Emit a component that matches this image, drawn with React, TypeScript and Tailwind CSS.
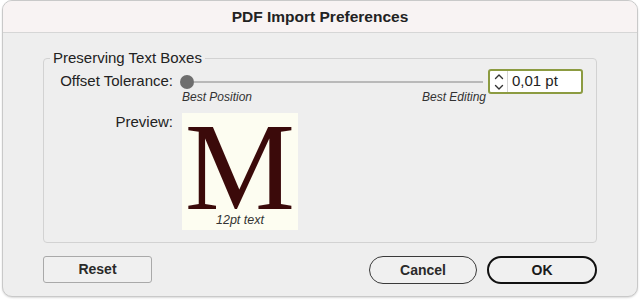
import React from "react";

const sans = "font-['Liberation_Sans',Arial,sans-serif]";

function Stepper() {
  return (
    <svg width="10" height="20" viewBox="0 0 10 20" fill="none">
      <path d="M1.5 6.5 L5 3 L8.5 6.5" stroke="#333" strokeWidth="1.4" strokeLinecap="round" strokeLinejoin="round" />
      <path d="M1.5 13.5 L5 17 L8.5 13.5" stroke="#333" strokeWidth="1.4" strokeLinecap="round" strokeLinejoin="round" />
    </svg>
  );
}

function OffsetRow() {
  return (
    <div className="mt-[2px] flex items-start">
      <div className="flex h-[25px] w-[129px] items-center justify-end text-[15px] text-[#222]">
        Offset Tolerance:
      </div>
      <div className="ml-[7px] w-[306px]">
        <div className="flex h-[21px] items-start">
          <div className="mt-[6px] h-[14px] w-[14px] rounded-full bg-[#6e6e6e]" />
          <div className="mt-[12px] h-[2px] w-[289px] bg-[#b9b9b9]" />
        </div>
        <div className="flex justify-between pl-[2px] text-[12px] italic leading-[14px] text-[#333]">
          <span>Best Position</span>
          <span>Best Editing</span>
        </div>
      </div>
      <div className="ml-[2px] flex h-[25px] w-[95px] items-stretch rounded-[3px] border-2 border-[#8c9b41] bg-white">
        <div className="flex w-[18px] items-center justify-center border-r border-[#d4d4d4]">
          <Stepper />
        </div>
        <div className="flex items-center pl-[4px] text-[15px] text-[#222]">0,01 pt</div>
      </div>
    </div>
  );
}

function PreviewRow() {
  return (
    <div className="mt-[9px] flex items-start">
      <div className="w-[129px] text-right text-[15px] leading-[18px] text-[#222]">Preview:</div>
      <div className="ml-[9px] flex h-[117px] w-[116px] flex-col items-center bg-[#fdfdf1]">
        <div className="pt-[10px] font-['Liberation_Serif','Times_New_Roman',serif] text-[124px] leading-[90px] text-[#3b0a0a]">
          M
        </div>
        <div className="text-[12.5px] italic leading-[14px] text-[#333]">12pt text</div>
      </div>
    </div>
  );
}

export default function App() {
  return (
    <div className={`h-[300px] w-[640px] bg-white ${sans}`}>
      <div className="ml-[2px] flex h-[297px] w-[636px] flex-col overflow-hidden rounded-[10px] border border-[#c9c9c9] bg-[#eeeeee] shadow-[0_1px_2px_rgba(0,0,0,0.15)]">
        <div className="flex h-[32px] shrink-0 items-center justify-center border-b border-[#d6d6d6] bg-[#f8f3f3] text-[15.5px] font-bold text-[#222]">
          PDF Import Preferences
        </div>
        <div className="flex flex-1 flex-col px-[40px] pt-[16px]">
          <fieldset className="h-[194px] rounded-[4px] border border-[#d2d2d2] pb-[13px]">
            <legend className="ml-[6px] px-[3px] text-[15px] leading-[18px] text-[#222]">
              Preserving Text Boxes
            </legend>
            <OffsetRow />
            <PreviewRow />
          </fieldset>
          <div className="mt-[13px] flex items-start justify-between">
            <button className="h-[27px] w-[109px] rounded-[3px] border border-[#a9a9a9] bg-[#f0f0f0] text-[14px] font-semibold text-[#2a2a2a]">
              Reset
            </button>
            <div className="flex gap-[10px]">
              <button className="h-[28px] w-[108px] rounded-full border-[1.5px] border-[#3a3a3a] bg-[#f0f0f0] text-[14px] font-semibold text-[#2a2a2a]">
                Cancel
              </button>
              <button className="h-[28px] w-[110px] rounded-full border-2 border-[#111] bg-[#f0f0f0] text-[14px] font-semibold text-[#1a1a1a]">
                OK
              </button>
            </div>
          </div>
        </div>
      </div>
    </div>
  );
}
